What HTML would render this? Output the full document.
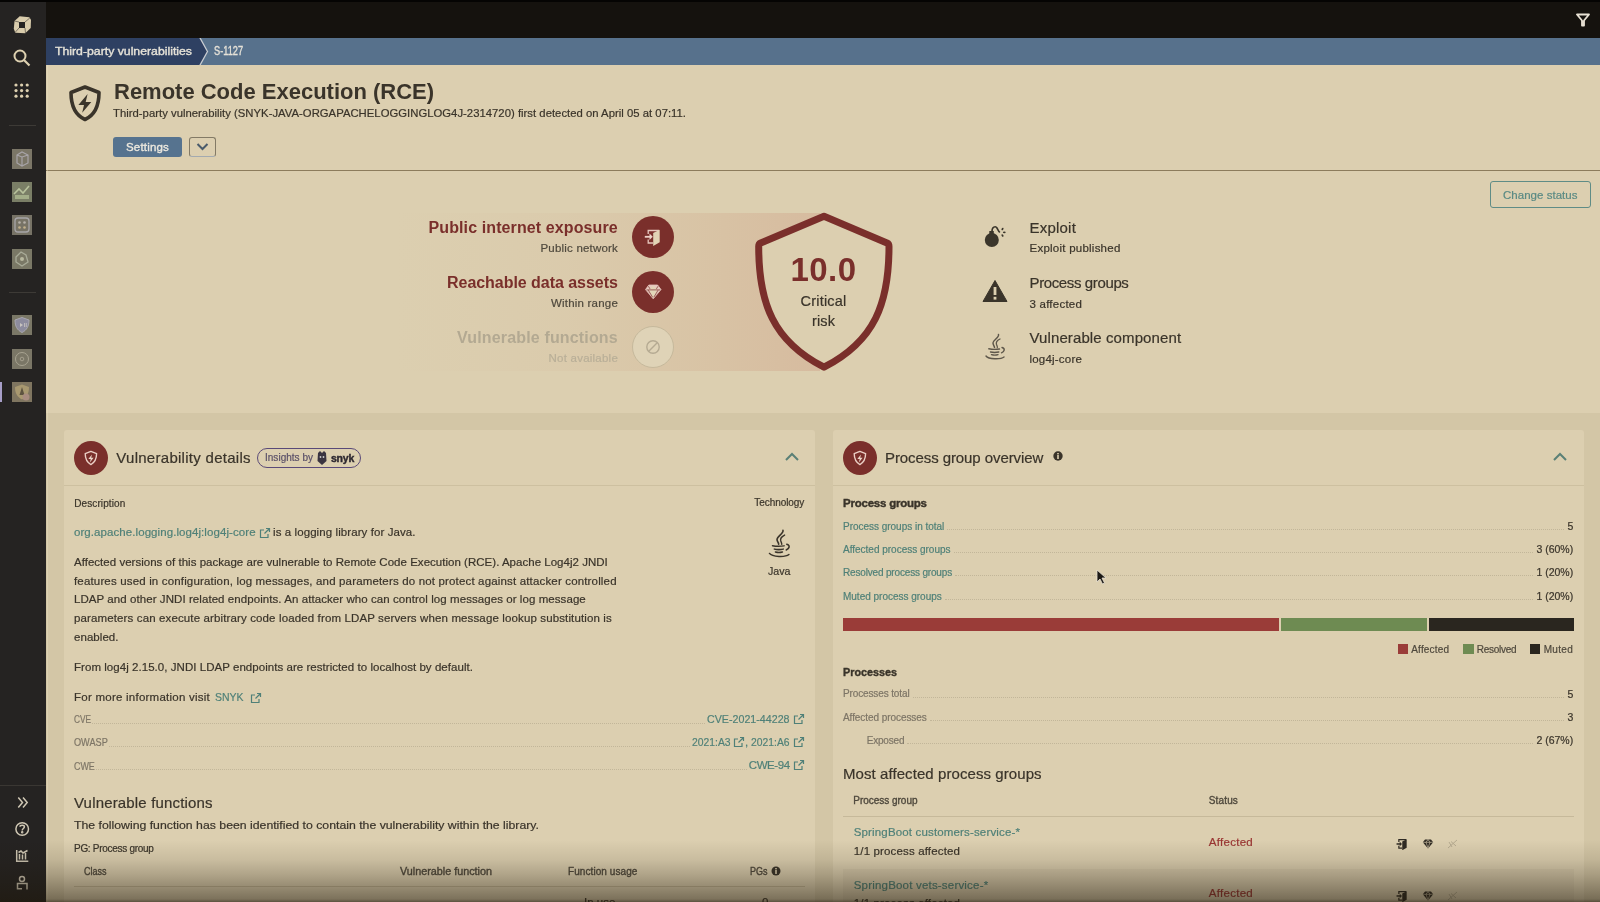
<!DOCTYPE html>
<html><head><meta charset="utf-8"><style>
html,body{margin:0;padding:0;width:1600px;height:902px;overflow:hidden;background:#dccfb0}
body{position:relative;font-family:"Liberation Sans",sans-serif}
.t{position:absolute;white-space:nowrap;line-height:1;-webkit-text-stroke:0.2px currentColor}
.r{position:absolute;display:block}
</style></head><body><div id="w" style="position:absolute;left:-4px;top:-4px;width:1608px;height:910px;overflow:hidden;filter:blur(0.4px)"><div style="position:absolute;left:4px;top:4px;width:1604px;height:906px">
<div class="r" style="left:-4px;top:-4px;width:1608px;height:910px;background:#dccfb0;"></div>
<div class="r" style="left:46px;top:-4px;width:1558px;height:42px;background:#15120e;"></div>
<div class="r" style="left:-4px;top:-4px;width:50px;height:910px;background:#252322;"></div>
<div class="r" style="left:-4px;top:-4px;width:1608px;height:6px;background:#050403;"></div>
<div class="r" style="left:46px;top:38px;width:1558px;height:27px;background:#57718c;"></div>
<svg class="r" style="left:46px;top:38px" width="170" height="27"><polygon points="0,0 154,0 162,13.5 154,27 0,27" fill="#2e4062"/><polyline points="153.5,-1 161.5,13.5 153.5,28" fill="none" stroke="#c9cdd2" stroke-width="1.3"/></svg>
<div class="t" style="left:55.00px;top:45.99px;font-size:11px;color:#e6e2d8;font-weight:500;-webkit-text-stroke:0.35px currentColor;transform:scaleX(1.1147);transform-origin:0 0;">Third-party vulnerabilities</div>
<div class="t" style="left:214.00px;top:45.14px;font-size:12px;color:#e6e2d8;font-weight:500;-webkit-text-stroke:0.35px currentColor;transform:scaleX(0.7673);transform-origin:0 0;">S-1127</div>
<svg class="r" style="left:67px;top:84px;" width="36" height="38" viewBox="0 0 36 38"><path d="M18 3 L32 8.5 C32 22 28 31 18 35.5 C8 31 4 22 4 8.5 Z" fill="none" stroke="#3a342a" stroke-width="3.6" stroke-linejoin="round"/><path d="M20.6 10 L11.4 21 L17 21 L15.2 28.8 L24.3 18 L18.7 18 Z" fill="#3a342a"/></svg>
<div class="t" style="left:114.00px;top:80.63px;font-size:22px;color:#3a342a;font-weight:700;-webkit-text-stroke:0;letter-spacing:-0.009px;">Remote Code Execution (RCE)</div>
<div class="t" style="left:113.00px;top:108.43px;font-size:11.3px;color:#3a342a;font-weight:400;letter-spacing:0.018px;">Third-party vulnerability (SNYK-JAVA-ORGAPACHELOGGINGLOG4J-2314720) first detected on April 05 at 07:11.</div>
<div class="r" style="left:113px;top:137px;width:69px;height:20px;background:#56738f;border-radius:3px;"></div>
<div class="t" style="left:126.00px;top:141.77px;font-size:11.5px;color:#ece8de;font-weight:500;-webkit-text-stroke:0.35px currentColor;letter-spacing:0.184px;">Settings</div>
<div class="r" style="left:189px;top:137px;width:27px;height:20px;background:transparent;border:1px solid #837a66;border-bottom-color:#a3aab0;border-radius:3px;box-sizing:border-box;"></div>
<svg class="r" style="left:196px;top:142px;" width="13" height="10" viewBox="0 0 13 10"><polyline points="1.5,2 6.5,7 11.5,2" fill="none" stroke="#4a5b6b" stroke-width="2"/></svg>
<div class="r" style="left:46px;top:170px;width:1558px;height:1px;background:#8c7c5c;"></div>
<div class="r" style="left:1490px;top:181px;width:101px;height:27px;background:transparent;border:1px solid #5f8c86;border-radius:3px;box-sizing:border-box;"></div>
<div class="t" style="left:1503.00px;top:189.52px;font-size:11.5px;color:#5a8a84;font-weight:400;letter-spacing:0.030px;">Change status</div>
<div class="r" style="left:397px;top:213px;width:423px;height:158px;background:linear-gradient(90deg, rgba(214,190,160,0) 0%, rgba(214,190,160,0.25) 40%, rgba(214,188,158,0.6) 72%, rgba(214,186,158,0.95) 100%);"></div>
<div class="t" style="left:428.50px;top:219.56px;font-size:16px;color:#7a2f2b;font-weight:700;-webkit-text-stroke:0;letter-spacing:0.109px;">Public internet exposure</div>
<div class="t" style="left:540.50px;top:242.67px;font-size:11.5px;color:#4f493d;font-weight:400;letter-spacing:0.195px;">Public network</div>
<div class="t" style="left:447.00px;top:274.56px;font-size:16px;color:#7a2f2b;font-weight:700;-webkit-text-stroke:0;letter-spacing:-0.038px;">Reachable data assets</div>
<div class="t" style="left:551.00px;top:297.67px;font-size:11.5px;color:#4f493d;font-weight:400;letter-spacing:0.206px;">Within range</div>
<div class="t" style="left:457.00px;top:329.56px;font-size:16px;color:#b3a992;font-weight:700;-webkit-text-stroke:0;letter-spacing:0.161px;">Vulnerable functions</div>
<div class="t" style="left:548.50px;top:352.67px;font-size:11.5px;color:#b9af98;font-weight:400;letter-spacing:0.233px;">Not available</div>
<div class="r" style="left:632px;top:216px;width:42px;height:42px;border-radius:50%;background:#7a2f2b"></div>
<div class="r" style="left:632px;top:271px;width:42px;height:42px;border-radius:50%;background:#7a2f2b"></div>
<div class="r" style="left:632px;top:326px;width:42px;height:42px;border-radius:50%;background:#dfd3b7;border:1px solid #c6b99c;box-sizing:border-box"></div>
<svg class="r" style="left:644px;top:228px;" width="18" height="20" viewBox="0 0 18 20"><path d="M4.2 6 L4.2 2.5 L15 2.5 M4.2 11.5 L4.2 15 L9 15" stroke="#e6c6bd" stroke-width="1.3" fill="none"/><path d="M9.2 5 L15.7 1.8 L15.7 14.3 L9.2 18 Z" fill="#e2d4b6"/><path d="M0.8 8.8 L6.5 8.8" stroke="#ecd2c8" stroke-width="1.8" fill="none"/><path d="M5.5 5.6 L8.8 8.8 L5.5 12 Z" fill="#ecd2c8"/></svg>
<svg class="r" style="left:645px;top:284px;" width="17" height="16" viewBox="0 0 17 16"><path d="M3.8 1 L12.6 1 L16 5.6 L8.2 14.8 L0.5 5.6 Z" fill="#e6cabe" stroke="#e6c3bb" stroke-width="0.8" stroke-linejoin="round"/><path d="M8.2 1.6 L4.5 5.6 L11.9 5.6 Z" fill="#e2d3b6"/><path d="M4.5 6.2 L11.9 6.2 L8.2 14.2 Z" fill="#e2d6b8"/><path d="M1.5 5.9 L15 5.9 M3.3 6.2 L7.6 13.2 M13.1 6.2 L8.8 13.2 M3.4 2.2 L5 4.9 M13 2.2 L11.4 4.9" stroke="#7a2f2b" stroke-width="0.7" fill="none"/></svg>
<svg class="r" style="left:645px;top:339px;" width="16" height="16" viewBox="0 0 16 16"><circle cx="8" cy="8" r="6.2" fill="none" stroke="#b5aa92" stroke-width="1.4"/><line x1="3.8" y1="12.2" x2="12.2" y2="3.8" stroke="#b5aa92" stroke-width="1.4"/></svg>
<svg class="r" style="left:751px;top:208px;" width="146" height="167" viewBox="0 0 146 167"><path d="M73 8.2 L136 35 C137.5 35.7 138 36.8 138 38.5 C138 95 124 133 73 159.2 C22 133 7.7 95 7.7 38.5 C7.7 36.8 8.2 35.7 9.7 35 Z" fill="#dccfb0" stroke="#7a2f2b" stroke-width="7" stroke-linejoin="round"/></svg>
<div class="t" style="left:790.50px;top:252.57px;font-size:33px;color:#7a2f2b;font-weight:700;-webkit-text-stroke:0;letter-spacing:0.438px;">10.0</div>
<div class="t" style="left:800.50px;top:294.23px;font-size:14.5px;color:#3a342a;font-weight:400;letter-spacing:0.213px;">Critical</div>
<div class="t" style="left:812.00px;top:313.93px;font-size:14.5px;color:#3a342a;font-weight:400;letter-spacing:0.113px;">risk</div>
<svg class="r" style="left:978px;top:220px;" width="34" height="34" viewBox="0 0 34 34"><circle cx="13.8" cy="20" r="7" fill="#3b362b"/><rect x="11.3" y="11" width="4.5" height="4" fill="#3b362b"/><path d="M14 11.5 C13.8 7 17.5 5.5 19 8 C19.8 9.5 20.5 11.5 21.5 12" fill="none" stroke="#3b362b" stroke-width="1.6" stroke-linecap="round"/><ellipse cx="24.5" cy="9" rx="0.9" ry="1.4" transform="rotate(30 24.5 9)" fill="#3b362b"/><ellipse cx="26.3" cy="12.3" rx="1.4" ry="0.9" fill="#3b362b"/><ellipse cx="24.5" cy="15.5" rx="0.9" ry="1.4" transform="rotate(-30 24.5 15.5)" fill="#3b362b"/></svg>
<div class="t" style="left:1029.50px;top:219.80px;font-size:15px;color:#3a342a;font-weight:400;letter-spacing:0.212px;">Exploit</div>
<div class="t" style="left:1029.50px;top:243.17px;font-size:11.5px;color:#3a342a;font-weight:400;letter-spacing:0.240px;">Exploit published</div>
<svg class="r" style="left:982px;top:279px;" width="26" height="24" viewBox="0 0 26 24"><path d="M13 1.5 L25 22.5 L1 22.5 Z" fill="#3a342a" stroke="#3a342a" stroke-width="1" stroke-linejoin="round"/><rect x="11.6" y="8" width="2.8" height="8" fill="#dccfb0"/><rect x="11.6" y="17.8" width="2.8" height="2.8" fill="#dccfb0"/></svg>
<div class="t" style="left:1029.50px;top:274.80px;font-size:15px;color:#3a342a;font-weight:400;letter-spacing:-0.374px;">Process groups</div>
<div class="t" style="left:1029.50px;top:298.77px;font-size:11.5px;color:#3a342a;font-weight:400;letter-spacing:0.225px;">3 affected</div>
<svg class="r" style="left:980px;top:330px;" width="30" height="36" viewBox="0 0 30 36"><path d="M18.5 4.5 C19.5 7.5 13 10 13 13 C13 15 14.5 16 14.5 17.5" fill="none" stroke="#5e574a" stroke-width="1.5" stroke-linecap="round"/><path d="M20 9 C17 10.5 15.8 12.5 16.5 14.5 C17 15.8 17.5 16.5 17.3 17.5" fill="none" stroke="#5e574a" stroke-width="1.3" stroke-linecap="round"/><path d="M8.8 18.8 C12 19.5 16 19.5 19.5 19 M10.5 22 C13 22.6 16 22.6 18.8 22 M11.5 24.6 C13.5 25.2 16 25.2 18 24.6 M22 17.5 C25.5 18.5 24.5 21.5 21.5 22.8 M6 26 C8.5 29.5 21 29.5 24 27" fill="none" stroke="#5e574a" stroke-width="1.4" stroke-linecap="round"/></svg>
<div class="t" style="left:1029.50px;top:329.80px;font-size:15px;color:#3a342a;font-weight:400;letter-spacing:0.107px;">Vulnerable component</div>
<div class="t" style="left:1029.50px;top:353.77px;font-size:11.5px;color:#3a342a;font-weight:400;letter-spacing:0.202px;">log4j-core</div>
<div class="r" style="left:46px;top:413px;width:1558px;height:493px;background:#d3c6a6;"></div>
<div class="r" style="left:64px;top:430px;width:751px;height:476px;background:#dccfb0;border-radius:3px 3px 0 0;"></div>
<div class="r" style="left:833px;top:430px;width:751px;height:476px;background:#dccfb0;border-radius:3px 3px 0 0;"></div>
<div class="r" style="left:64px;top:484.5px;width:751px;height:1.5px;background:#cdc0a0;"></div>
<div class="r" style="left:833px;top:484.5px;width:751px;height:1.5px;background:#cdc0a0;"></div>
<div class="r" style="left:74px;top:441px;width:34px;height:34px;border-radius:50%;background:#7a2f2b"></div>
<svg class="r" style="left:83px;top:449px;" width="16" height="18" viewBox="0 0 16 18"><path d="M7.9 2.4 L13.6 4.6 C13.6 10 11.6 13.6 7.9 15.6 C4.2 13.6 2.2 10 2.2 4.6 Z" fill="none" stroke="#ebcfc5" stroke-width="1.4" stroke-linejoin="round"/><path d="M9 5.6 L5.3 10.1 L7.7 10.1 L6.9 13.4 L10.6 8.7 L8.2 8.7 Z" fill="#ebd6ca"/></svg>
<div class="t" style="left:116.30px;top:449.70px;font-size:15px;color:#3a342a;font-weight:400;letter-spacing:0.278px;">Vulnerability details</div>
<div class="r" style="left:257px;top:448px;width:104px;height:20px;background:transparent;border:1.2px solid #5a4a78;border-radius:10px;box-sizing:border-box;"></div>
<div class="t" style="left:265.00px;top:453.04px;font-size:10px;color:#5a5068;font-weight:400;letter-spacing:0.017px;">Insights by</div>
<svg class="r" style="left:316px;top:450px;" width="12" height="16" viewBox="0 0 12 16"><path d="M2 3 L4 1 L6 3 L8 1 L10 3 L10.5 11 L6 15 L1.5 11 Z" fill="#3a3440"/><circle cx="4.5" cy="7" r="0.9" fill="#ccc"/><circle cx="7.5" cy="7" r="0.9" fill="#ccc"/></svg>
<div class="t" style="left:331.00px;top:453.11px;font-size:10.5px;color:#2d2830;font-weight:700;-webkit-text-stroke:0.4px currentColor;letter-spacing:-0.234px;">snyk</div>
<svg class="r" style="left:784px;top:451px;" width="16" height="12" viewBox="0 0 16 12"><polyline points="2,9 8,3 14,9" fill="none" stroke="#5a8076" stroke-width="2"/></svg>
<div class="t" style="left:74.30px;top:498.54px;font-size:10px;color:#3a342a;font-weight:400;letter-spacing:0.089px;">Description</div>
<div class="t" style="left:754.25px;top:498.29px;font-size:10px;color:#3a342a;font-weight:400;letter-spacing:-0.059px;">Technology</div>
<svg class="r" style="left:763px;top:524.5px;" width="32.4" height="39.6" viewBox="0 0 30 36"><path d="M18.5 4.5 C19.5 7.5 13 10 13 13 C13 15 14.5 16 14.5 17.5" fill="none" stroke="#3a342a" stroke-width="1.5" stroke-linecap="round"/><path d="M20 9 C17 10.5 15.8 12.5 16.5 14.5 C17 15.8 17.5 16.5 17.3 17.5" fill="none" stroke="#3a342a" stroke-width="1.3" stroke-linecap="round"/><path d="M8.8 18.8 C12 19.5 16 19.5 19.5 19 M10.5 22 C13 22.6 16 22.6 18.8 22 M11.5 24.6 C13.5 25.2 16 25.2 18 24.6 M22 17.5 C25.5 18.5 24.5 21.5 21.5 22.8 M6 26 C8.5 29.5 21 29.5 24 27" fill="none" stroke="#3a342a" stroke-width="1.4" stroke-linecap="round"/></svg>
<div class="t" style="left:768.00px;top:566.27px;font-size:11.5px;color:#3a342a;font-weight:400;transform:scaleX(0.9266);transform-origin:0 0;">Java</div>
<div class="t" style="left:74.00px;top:526.77px;font-size:11.5px;color:#4f8078;font-weight:400;letter-spacing:0.074px;">org.apache.logging.log4j:log4j-core</div>
<svg class="r" style="left:259px;top:527px;" width="12" height="12" viewBox="0 0 12 12"><path d="M7 1.5 L10.5 1.5 L10.5 5 M10.5 1.5 L5.5 6.5 M9 7 L9 10.5 L1.5 10.5 L1.5 3 L5 3" fill="none" stroke="#4f8078" stroke-width="1.2"/></svg>
<div class="t" style="left:273.00px;top:526.77px;font-size:11.5px;color:#3a342a;font-weight:400;letter-spacing:0.086px;">is a logging library for Java.</div>
<div class="t" style="left:74.00px;top:557.02px;font-size:11.5px;color:#3a342a;font-weight:400;letter-spacing:0.022px;">Affected versions of this package are vulnerable to Remote Code Execution (RCE). Apache Log4j2 JNDI</div>
<div class="t" style="left:74.00px;top:575.72px;font-size:11.5px;color:#3a342a;font-weight:400;letter-spacing:0.161px;">features used in configuration, log messages, and parameters do not protect against attacker controlled</div>
<div class="t" style="left:74.00px;top:594.42px;font-size:11.5px;color:#3a342a;font-weight:400;letter-spacing:0.068px;">LDAP and other JNDI related endpoints. An attacker who can control log messages or log message</div>
<div class="t" style="left:74.00px;top:613.12px;font-size:11.5px;color:#3a342a;font-weight:400;letter-spacing:0.129px;">parameters can execute arbitrary code loaded from LDAP servers when message lookup substitution is</div>
<div class="t" style="left:74.00px;top:631.82px;font-size:11.5px;color:#3a342a;font-weight:400;letter-spacing:0.051px;">enabled.</div>
<div class="t" style="left:74.00px;top:662.27px;font-size:11.5px;color:#3a342a;font-weight:400;letter-spacing:0.045px;">From log4j 2.15.0, JNDI LDAP endpoints are restricted to localhost by default.</div>
<div class="t" style="left:74.00px;top:691.77px;font-size:11.5px;color:#3a342a;font-weight:400;letter-spacing:0.243px;">For more information visit</div>
<div class="t" style="left:214.75px;top:691.77px;font-size:11.5px;color:#4f8078;font-weight:400;transform:scaleX(0.9097);transform-origin:0 0;">SNYK</div>
<svg class="r" style="left:250px;top:692px;" width="12" height="12" viewBox="0 0 12 12"><path d="M7 1.5 L10.5 1.5 L10.5 5 M10.5 1.5 L5.5 6.5 M9 7 L9 10.5 L1.5 10.5 L1.5 3 L5 3" fill="none" stroke="#4f8078" stroke-width="1.2"/></svg>
<div class="t" style="left:74.00px;top:715.03px;font-size:10px;color:#7d7566;font-weight:400;transform:scaleX(0.8267);transform-origin:0 0;">CVE</div>
<div class="r" style="left:92px;top:722.5px;width:613px;height:1.0px;background:transparent;border-top:1px dotted #c2b699;"></div>
<div class="t" style="left:74.00px;top:738.03px;font-size:10px;color:#7d7566;font-weight:400;transform:scaleX(0.9156);transform-origin:0 0;">OWASP</div>
<div class="r" style="left:108.75px;top:745.5px;width:581.25px;height:1.0px;background:transparent;border-top:1px dotted #c2b699;"></div>
<div class="t" style="left:74.00px;top:761.53px;font-size:10px;color:#7d7566;font-weight:400;transform:scaleX(0.8895);transform-origin:0 0;">CWE</div>
<div class="r" style="left:95.75px;top:769.0px;width:651.0px;height:1.0px;background:transparent;border-top:1px dotted #c2b699;"></div>
<div class="t" style="left:707.00px;top:713.77px;font-size:11.5px;color:#4f8078;font-weight:400;transform:scaleX(0.9288);transform-origin:0 0;">CVE-2021-44228</div>
<svg class="r" style="left:793px;top:713px;" width="12" height="12" viewBox="0 0 12 12"><path d="M7 1.5 L10.5 1.5 L10.5 5 M10.5 1.5 L5.5 6.5 M9 7 L9 10.5 L1.5 10.5 L1.5 3 L5 3" fill="none" stroke="#4f8078" stroke-width="1.2"/></svg>
<div class="t" style="left:692.00px;top:736.77px;font-size:11.5px;color:#4f8078;font-weight:400;transform:scaleX(0.8993);transform-origin:0 0;">2021:A3</div>
<svg class="r" style="left:733px;top:736px;" width="12" height="12" viewBox="0 0 12 12"><path d="M7 1.5 L10.5 1.5 L10.5 5 M10.5 1.5 L5.5 6.5 M9 7 L9 10.5 L1.5 10.5 L1.5 3 L5 3" fill="none" stroke="#4f8078" stroke-width="1.2"/></svg>
<div class="t" style="left:745.00px;top:736.77px;font-size:11.5px;color:#4f8078;font-weight:400;">,</div>
<div class="t" style="left:751.00px;top:736.77px;font-size:11.5px;color:#4f8078;font-weight:400;transform:scaleX(0.8993);transform-origin:0 0;">2021:A6</div>
<svg class="r" style="left:793px;top:736px;" width="12" height="12" viewBox="0 0 12 12"><path d="M7 1.5 L10.5 1.5 L10.5 5 M10.5 1.5 L5.5 6.5 M9 7 L9 10.5 L1.5 10.5 L1.5 3 L5 3" fill="none" stroke="#4f8078" stroke-width="1.2"/></svg>
<div class="t" style="left:748.75px;top:760.27px;font-size:11.5px;color:#4f8078;font-weight:400;letter-spacing:-0.409px;">CWE-94</div>
<svg class="r" style="left:793px;top:759px;" width="12" height="12" viewBox="0 0 12 12"><path d="M7 1.5 L10.5 1.5 L10.5 5 M10.5 1.5 L5.5 6.5 M9 7 L9 10.5 L1.5 10.5 L1.5 3 L5 3" fill="none" stroke="#4f8078" stroke-width="1.2"/></svg>
<div class="t" style="left:74.00px;top:795.30px;font-size:15px;color:#3a342a;font-weight:400;letter-spacing:0.169px;">Vulnerable functions</div>
<div class="t" style="left:74.00px;top:819.52px;font-size:11.5px;color:#3a342a;font-weight:400;transform:scaleX(1.0671);transform-origin:0 0;">The following function has been identified to contain the vulnerability within the library.</div>
<div class="t" style="left:74.00px;top:843.78px;font-size:10px;color:#3a342a;font-weight:400;letter-spacing:-0.294px;">PG: Process group</div>
<div class="t" style="left:84.00px;top:866.53px;font-size:10px;color:#4f493d;font-weight:500;-webkit-text-stroke:0.35px currentColor;transform:scaleX(0.9000);transform-origin:0 0;">Class</div>
<div class="t" style="left:399.75px;top:866.53px;font-size:10px;color:#4f493d;font-weight:500;-webkit-text-stroke:0.35px currentColor;transform:scaleX(1.0792);transform-origin:0 0;">Vulnerable function</div>
<div class="t" style="left:568.00px;top:866.53px;font-size:10px;color:#4f493d;font-weight:500;-webkit-text-stroke:0.35px currentColor;letter-spacing:0.079px;">Function usage</div>
<div class="t" style="left:749.50px;top:866.53px;font-size:10px;color:#4f493d;font-weight:500;-webkit-text-stroke:0.35px currentColor;transform:scaleX(0.8996);transform-origin:0 0;">PGs</div>
<svg class="r" style="left:771px;top:865.5px;" width="10" height="10" viewBox="0 0 10 10"><circle cx="5" cy="5" r="4.5" fill="#3a342a"/><rect x="4.2" y="4" width="1.6" height="4" fill="#dccfb0"/><rect x="4.2" y="2" width="1.6" height="1.4" fill="#dccfb0"/></svg>
<div class="r" style="left:74px;top:886px;width:731px;height:1px;background:#c2b595;"></div>
<div class="t" style="left:584.00px;top:896.77px;font-size:11.5px;color:#3a342a;font-weight:400;">In use</div>
<div class="t" style="left:762.00px;top:896.77px;font-size:11.5px;color:#3a342a;font-weight:400;">0</div>
<div class="r" style="left:843px;top:441px;width:34px;height:34px;border-radius:50%;background:#7a2f2b"></div>
<svg class="r" style="left:852px;top:449px;" width="16" height="18" viewBox="0 0 16 18"><path d="M7.9 2.4 L13.6 4.6 C13.6 10 11.6 13.6 7.9 15.6 C4.2 13.6 2.2 10 2.2 4.6 Z" fill="none" stroke="#ebcfc5" stroke-width="1.4" stroke-linejoin="round"/><path d="M9 5.6 L5.3 10.1 L7.7 10.1 L6.9 13.4 L10.6 8.7 L8.2 8.7 Z" fill="#ebd6ca"/></svg>
<div class="t" style="left:885.00px;top:450.30px;font-size:15px;color:#3a342a;font-weight:400;letter-spacing:-0.084px;">Process group overview</div>
<svg class="r" style="left:1053px;top:451px;" width="10" height="10" viewBox="0 0 10 10"><circle cx="5" cy="5" r="4.7" fill="#3a342a"/><rect x="4.2" y="4" width="1.6" height="4" fill="#dccfb0"/><rect x="4.2" y="2" width="1.6" height="1.4" fill="#dccfb0"/></svg>
<svg class="r" style="left:1552px;top:451px;" width="16" height="12" viewBox="0 0 16 12"><polyline points="2,9 8,3 14,9" fill="none" stroke="#5a8076" stroke-width="2"/></svg>
<div class="t" style="left:843.00px;top:498.27px;font-size:11.5px;color:#3a342a;font-weight:700;-webkit-text-stroke:0.4px currentColor;letter-spacing:-0.225px;">Process groups</div>
<div class="t" style="left:843.00px;top:521.53px;font-size:10px;color:#4f8078;font-weight:400;letter-spacing:-0.021px;">Process groups in total</div>
<div class="t" style="left:1567.41px;top:521.11px;font-size:10.5px;color:#3a342a;font-weight:400;">5</div>
<div class="r" style="left:947.25px;top:529.0px;width:617.15625px;height:1.0px;background:transparent;border-top:1px dotted #c2b699;"></div>
<div class="t" style="left:843.00px;top:544.53px;font-size:10px;color:#4f8078;font-weight:400;letter-spacing:-0.007px;">Affected process groups</div>
<div class="t" style="left:1536.45px;top:544.11px;font-size:10.5px;color:#3a342a;font-weight:400;">3 (60%)</div>
<div class="r" style="left:953.5px;top:552.0px;width:579.953125px;height:1.0px;background:transparent;border-top:1px dotted #c2b699;"></div>
<div class="t" style="left:843.00px;top:567.78px;font-size:10px;color:#4f8078;font-weight:400;letter-spacing:-0.167px;">Resolved process groups</div>
<div class="t" style="left:1536.45px;top:567.36px;font-size:10.5px;color:#3a342a;font-weight:400;">1 (20%)</div>
<div class="r" style="left:955px;top:575.25px;width:578.453125px;height:1.0px;background:transparent;border-top:1px dotted #c2b699;"></div>
<div class="t" style="left:843.00px;top:591.53px;font-size:10px;color:#4f8078;font-weight:400;letter-spacing:-0.010px;">Muted process groups</div>
<div class="t" style="left:1536.45px;top:591.11px;font-size:10.5px;color:#3a342a;font-weight:400;">1 (20%)</div>
<div class="r" style="left:944.75px;top:599.0px;width:588.703125px;height:1.0px;background:transparent;border-top:1px dotted #c2b699;"></div>
<div class="r" style="left:843px;top:618px;width:436px;height:13px;background:#9a3c38;"></div>
<div class="r" style="left:1281px;top:618px;width:146px;height:13px;background:#6e8b52;"></div>
<div class="r" style="left:1428.5px;top:618px;width:145.0px;height:13px;background:#2a261f;"></div>
<div class="r" style="left:1397.5px;top:644px;width:10.0px;height:10px;background:#9a3c38;"></div>
<div class="t" style="left:1411.25px;top:644.53px;font-size:10px;color:#4f493d;font-weight:400;letter-spacing:0.186px;">Affected</div>
<div class="r" style="left:1463.25px;top:644px;width:10.25px;height:10px;background:#6e8b52;"></div>
<div class="t" style="left:1476.75px;top:644.53px;font-size:10px;color:#4f493d;font-weight:400;letter-spacing:-0.273px;">Resolved</div>
<div class="r" style="left:1530px;top:644px;width:10px;height:10px;background:#2a261f;"></div>
<div class="t" style="left:1543.75px;top:644.53px;font-size:10px;color:#4f493d;font-weight:400;letter-spacing:0.291px;">Muted</div>
<div class="t" style="left:843.00px;top:667.02px;font-size:11.5px;color:#3a342a;font-weight:700;-webkit-text-stroke:0.4px currentColor;transform:scaleX(0.9389);transform-origin:0 0;">Processes</div>
<div class="t" style="left:843.00px;top:689.03px;font-size:10px;color:#7d7566;font-weight:400;letter-spacing:-0.125px;">Processes total</div>
<div class="t" style="left:1567.41px;top:688.61px;font-size:10.5px;color:#3a342a;font-weight:400;">5</div>
<div class="r" style="left:912.5px;top:696.5px;width:651.90625px;height:1.0px;background:transparent;border-top:1px dotted #c2b699;"></div>
<div class="t" style="left:843.00px;top:712.53px;font-size:10px;color:#7d7566;font-weight:400;letter-spacing:-0.062px;">Affected processes</div>
<div class="t" style="left:1567.41px;top:712.11px;font-size:10.5px;color:#3a342a;font-weight:400;">3</div>
<div class="r" style="left:929.75px;top:720.0px;width:634.65625px;height:1.0px;background:transparent;border-top:1px dotted #c2b699;"></div>
<div class="t" style="left:866.75px;top:735.78px;font-size:10px;color:#7d7566;font-weight:400;letter-spacing:-0.203px;">Exposed</div>
<div class="t" style="left:1536.45px;top:735.36px;font-size:10.5px;color:#3a342a;font-weight:400;">2 (67%)</div>
<div class="r" style="left:907.25px;top:743.25px;width:626.203125px;height:1.0px;background:transparent;border-top:1px dotted #c2b699;"></div>
<div class="t" style="left:843.00px;top:765.80px;font-size:15px;color:#3a342a;font-weight:400;letter-spacing:0.078px;">Most affected process groups</div>
<div class="t" style="left:853.25px;top:795.78px;font-size:10px;color:#4f493d;font-weight:500;-webkit-text-stroke:0.35px currentColor;letter-spacing:-0.018px;">Process group</div>
<div class="t" style="left:1208.75px;top:795.78px;font-size:10px;color:#4f493d;font-weight:500;-webkit-text-stroke:0.35px currentColor;letter-spacing:0.148px;">Status</div>
<div class="r" style="left:843px;top:816px;width:731px;height:1px;background:#c6b99a;"></div>
<div class="t" style="left:853.75px;top:827.02px;font-size:11.5px;color:#4f8078;font-weight:400;letter-spacing:0.154px;">SpringBoot customers-service-*</div>
<div class="t" style="left:853.75px;top:846.27px;font-size:11.5px;color:#3a342a;font-weight:400;letter-spacing:0.149px;">1/1 process affected</div>
<div class="t" style="left:1208.75px;top:837.02px;font-size:11.5px;color:#9a3533;font-weight:400;letter-spacing:0.287px;">Affected</div>
<div class="t" style="left:853.75px;top:879.52px;font-size:11.5px;color:#4f8078;font-weight:400;letter-spacing:0.193px;">SpringBoot vets-service-*</div>
<div class="t" style="left:853.75px;top:898.27px;font-size:11.5px;color:#3a342a;font-weight:400;letter-spacing:0.149px;">1/1 process affected</div>
<div class="t" style="left:1208.75px;top:888.27px;font-size:11.5px;color:#9a3533;font-weight:400;letter-spacing:0.287px;">Affected</div>
<svg class="r" style="left:1396px;top:838px;" width="12" height="12" viewBox="0 0 12 12"><g transform="scale(0.68)"><path d="M4.2 6 L4.2 2.5 L15 2.5 M4.2 11.5 L4.2 15 L9 15" stroke="#2f2a23" stroke-width="1.8" fill="none"/><path d="M9.2 5 L15.7 1.8 L15.7 14.3 L9.2 18 Z" fill="#2f2a23"/><path d="M0.8 8.8 L6.5 8.8" stroke="#2f2a23" stroke-width="2.2" fill="none"/><path d="M5.5 5.6 L8.8 8.8 L5.5 12 Z" fill="#2f2a23"/></g></svg>
<svg class="r" style="left:1422px;top:838px;" width="12" height="12" viewBox="0 0 12 12"><path d="M3 1.5 L9 1.5 L11.2 4.3 L6 10.5 L0.8 4.3 Z" fill="#2f2a23"/><path d="M1 4.3 L11 4.3 M6 10 L4 4.3 L6 1.5 L8 4.3 Z" stroke="#dccfb0" stroke-width="0.6" fill="none"/></svg>
<svg class="r" style="left:1446px;top:838px;" width="13" height="12" viewBox="0 0 13 12"><path d="M2 10 L11 2 M3 4 L6 9 M5 3.5 L10 8" stroke="#b5aa90" stroke-width="1" fill="none"/></svg>
<svg class="r" style="left:1396px;top:890px;" width="12" height="12" viewBox="0 0 12 12"><g transform="scale(0.68)"><path d="M4.2 6 L4.2 2.5 L15 2.5 M4.2 11.5 L4.2 15 L9 15" stroke="#2f2a23" stroke-width="1.8" fill="none"/><path d="M9.2 5 L15.7 1.8 L15.7 14.3 L9.2 18 Z" fill="#2f2a23"/><path d="M0.8 8.8 L6.5 8.8" stroke="#2f2a23" stroke-width="2.2" fill="none"/><path d="M5.5 5.6 L8.8 8.8 L5.5 12 Z" fill="#2f2a23"/></g></svg>
<svg class="r" style="left:1422px;top:890px;" width="12" height="12" viewBox="0 0 12 12"><path d="M3 1.5 L9 1.5 L11.2 4.3 L6 10.5 L0.8 4.3 Z" fill="#2f2a23"/><path d="M1 4.3 L11 4.3 M6 10 L4 4.3 L6 1.5 L8 4.3 Z" stroke="#dccfb0" stroke-width="0.6" fill="none"/></svg>
<svg class="r" style="left:1446px;top:890px;" width="13" height="12" viewBox="0 0 13 12"><path d="M2 10 L11 2 M3 4 L6 9 M5 3.5 L10 8" stroke="#b5aa90" stroke-width="1" fill="none"/></svg>
<svg class="r" style="left:1096px;top:569px;" width="12" height="16" viewBox="0 0 12 16"><path d="M1 1 L1 13 L4 10 L6.5 15 L8.5 14 L6 9 L10 9 Z" fill="#1d1a16" stroke="#e8e2d4" stroke-width="0.8"/></svg>
<svg class="r" style="left:0px;top:0px;" width="40" height="40" viewBox="0 0 40 40"><path d="M14.5 21 L19.7 16.3 L29.3 17.3 L31 19.7 L30.7 28 L25.3 33.3 L15.3 32.7 L13.8 28.7 Z" fill="#d9ccac"/><rect x="19" y="22" width="6" height="6" fill="#262423"/><path d="M19 22 L14.5 21 M25 22 L29.8 18 M19 28 L15 32.5 M25 28 L25.5 33" stroke="#3a3530" stroke-width="0.6"/></svg>
<svg class="r" style="left:13px;top:49px;" width="18" height="18" viewBox="0 0 18 18"><circle cx="7" cy="7" r="5.5" fill="none" stroke="#ddd0b0" stroke-width="2"/><line x1="11" y1="11" x2="16.5" y2="16.5" stroke="#ddd0b0" stroke-width="2.2"/></svg>
<svg class="r" style="left:14px;top:83px;" width="16" height="16" viewBox="0 0 16 16"><circle cx="2.0" cy="2.0" r="1.6" fill="#ddd0b0"/><circle cx="2.0" cy="7.6" r="1.6" fill="#ddd0b0"/><circle cx="2.0" cy="13.2" r="1.6" fill="#ddd0b0"/><circle cx="7.6" cy="2.0" r="1.6" fill="#ddd0b0"/><circle cx="7.6" cy="7.6" r="1.6" fill="#ddd0b0"/><circle cx="7.6" cy="13.2" r="1.6" fill="#ddd0b0"/><circle cx="13.2" cy="2.0" r="1.6" fill="#ddd0b0"/><circle cx="13.2" cy="7.6" r="1.6" fill="#ddd0b0"/><circle cx="13.2" cy="13.2" r="1.6" fill="#ddd0b0"/></svg>
<div class="r" style="left:9px;top:125px;width:27px;height:1px;background:#3d3a36;"></div>
<div class="r" style="left:9px;top:292px;width:27px;height:1px;background:#3d3a36;"></div>
<div class="r" style="left:0px;top:785px;width:46px;height:1px;background:#3a3733;"></div>
<div class="r" style="left:12px;top:148.5px;width:20px;height:20.0px;background:#7b7667;"></div>
<div class="r" style="left:12px;top:182px;width:20px;height:20px;background:#7a7e66;"></div>
<div class="r" style="left:12px;top:215px;width:20px;height:20px;background:#777366;"></div>
<div class="r" style="left:12px;top:248.5px;width:20px;height:20.0px;background:#7a7866;"></div>
<div class="r" style="left:12px;top:315px;width:20px;height:20px;background:#7a7766;"></div>
<div class="r" style="left:12px;top:349px;width:20px;height:20px;background:#7a7666;"></div>
<div class="r" style="left:12px;top:382px;width:20px;height:20px;background:#7f7560;"></div>
<svg class="r" style="left:12px;top:148.5px;" width="20" height="20" viewBox="0 0 20 20"><path d="M5 6 L10 3 L16 6 L16 14 L10 17 L5 14 Z M10 8 L16 6 M10 8 L10 17 M5 6 L10 8" fill="none" stroke="#a8a4a8" stroke-width="1.2"/></svg>
<svg class="r" style="left:12px;top:182px;" width="20" height="20" viewBox="0 0 20 20"><path d="M2 12 L7 7 L11 11 L17 4" fill="none" stroke="#b8c29c" stroke-width="1.6"/><rect x="3" y="13" width="14" height="4" fill="#a3ad88"/></svg>
<svg class="r" style="left:12px;top:215px;" width="20" height="20" viewBox="0 0 20 20"><rect x="3" y="3" width="14" height="14" rx="3" fill="none" stroke="#a7a5a8" stroke-width="1.3"/><circle cx="7.5" cy="7.5" r="1.3" fill="#b5b0a8"/><circle cx="12.5" cy="7.5" r="1.3" fill="#b5b0a8"/><circle cx="7.5" cy="12.5" r="1.3" fill="#c2b08a"/><circle cx="12.5" cy="12.5" r="1.3" fill="#c2b08a"/></svg>
<svg class="r" style="left:12px;top:248.5px;" width="20" height="20" viewBox="0 0 20 20"><path d="M4 8 L9 3 L14 6 L16 13 L10 17 L4 13 Z" fill="none" stroke="#a9ab98" stroke-width="1.3"/><circle cx="10" cy="10" r="2" fill="#b7b89f"/></svg>
<svg class="r" style="left:12px;top:315px;" width="20" height="20" viewBox="0 0 20 20"><path d="M10 2.5 L17 5 C17 11 15 15 10 17.5 C5 15 3 11 3 5 Z" fill="#8d8c9e" stroke="#a9a7b0" stroke-width="1"/><path d="M8 8 L11 10 L8 12 Z M12 8 L12.8 8 L12.8 12 L12 12 Z M13.8 8 L14.6 8 L14.6 12 L13.8 12 Z" fill="#c8c4c0"/></svg>
<svg class="r" style="left:12px;top:349px;" width="20" height="20" viewBox="0 0 20 20"><circle cx="10" cy="10" r="6.5" fill="none" stroke="#a8a391" stroke-width="1"/><circle cx="10" cy="10" r="1.8" fill="none" stroke="#a8a391" stroke-width="0.9"/></svg>
<svg class="r" style="left:12px;top:382px;" width="20" height="20" viewBox="0 0 20 20"><path d="M10 2.5 L17 5 C17 11 15 15 10 17.5 C5 15 3 11 3 5 Z" fill="#a89870"/><path d="M10 5 L7.5 13 L12.5 13 Z" fill="#5e5340"/><circle cx="14" cy="15" r="3.5" fill="#a88c80"/></svg>
<div class="r" style="left:0px;top:382px;width:2px;height:20px;background:#a79ec8;"></div>
<svg class="r" style="left:0px;top:790px;" width="46" height="105" viewBox="0 0 46 105"><g fill="none" stroke="#cfc7b4" stroke-width="1.5"><polyline points="18.3,797.5 22.5,802.5 18.3,807.5" transform="translate(0,-790)"/><polyline points="23,797.5 27.2,802.5 23,807.5" transform="translate(0,-790)"/><circle cx="22.2" cy="39" r="6.3"/><path d="M20 36.8 C20 34.6 24.4 34.6 24.4 36.8 C24.4 38.5 22.2 38.6 22.2 40.5"/><circle cx="22.2" cy="42.3" r="0.5" fill="#cfc7b4"/><path d="M16.7 60 L16.7 71.3 L28.3 71.3"/><path d="M19.5 69.5 L19.5 64 M22.5 69.5 L22.5 64.5 M25.5 69.5 L25.5 63 M18.5 62.5 L21 61 L23 63 L27.5 60.5"/><circle cx="22" cy="89" r="2.5"/><path d="M17.5 99.5 L17.5 93.5 L27 93.5 L27 99.5 M17.5 98.8 L22 98.8"/></g></svg>
<svg class="r" style="left:1576px;top:13px;" width="14" height="14" viewBox="0 0 14 14"><path d="M1 1.5 L13 1.5 L8 7.5 L8 12.5 L6 12.5 L6 7.5 Z" fill="none" stroke="#e8e2d4" stroke-width="1.8" stroke-linejoin="round"/><path d="M6.3 8 L7.7 8 L7.7 12.5 L6.3 12.5 Z" fill="#e8e2d4"/></svg>
<div class="r" style="left:47px;top:65px;width:1px;height:837px;background:rgba(235,225,200,0.35);"></div>
<div class="r" style="left:843px;top:869px;width:731px;height:37px;background:rgba(60,45,20,0.04);"></div>
<div class="r" style="left:-4px;top:840px;width:1608px;height:66px;background:linear-gradient(180deg, rgba(30,22,8,0) 0px, rgba(30,22,8,0.05) 10px, rgba(30,22,8,0.1) 20px, rgba(30,22,8,0.24) 35px, rgba(30,22,8,0.40) 50px, rgba(30,22,8,0.5) 59px, rgba(30,22,8,0.68) 62px, rgba(30,22,8,0.68) 66px);"></div>
</div></div></body></html>
